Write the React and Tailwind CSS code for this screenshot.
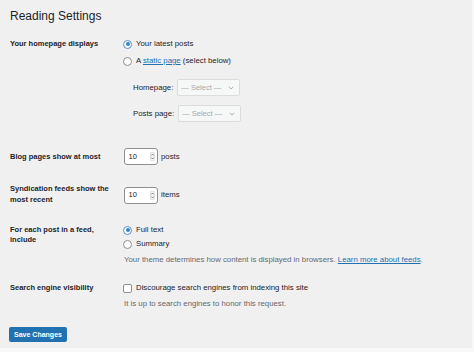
import React from "react";

function Label({ children }) {
	return (
		<div className="w-[113px] shrink-0 text-[7.5px] leading-[10px] font-bold text-[#1d2327]">
			{children}
		</div>
	);
}

function Radio({ checked }) {
	return (
		<span
			className={`flex items-center justify-center w-[9px] h-[9px] rounded-full bg-white border shrink-0 ${
				checked ? "border-[#5a8fc4]" : "border-[#8c8f94]"
			}`}>
			{checked && <span className="w-[4px] h-[4px] rounded-full bg-[#3582c4]" />}
		</span>
	);
}

function RadioRow({ checked, className = "", children }) {
	return (
		<div className={`flex items-center gap-[4px] h-[10px] ${className}`}>
			<Radio checked={checked} />
			<span className="text-[7.8px] leading-[10px] whitespace-nowrap">{children}</span>
		</div>
	);
}

function SelectBox() {
	return (
		<div className="flex items-center justify-between w-[63px] h-[17px] pl-[3px] pr-[5px] bg-[#f6f7f7] border border-[#dcdcde] rounded-[2px]">
			<span className="text-[7.5px] text-[#a7aaad]">— Select —</span>
			<svg width="6" height="4" viewBox="0 0 6 4" fill="none">
				<path d="M0.8 0.8 L3 3 L5.2 0.8" stroke="#a7aaad" strokeWidth="0.9" />
			</svg>
		</div>
	);
}

function NumberInput({ value }) {
	return (
		<div className="flex items-center justify-between w-[34px] h-[17px] pl-[3.5px] pr-[2px] bg-white border border-[#8c8f94] rounded-[3px]">
			<span className="text-[7.5px] leading-[10px]">{value}</span>
			<svg width="5" height="9" viewBox="0 0 5 9" fill="none">
				<rect x="0.3" y="0.3" width="4.4" height="8.4" rx="1.2" fill="#f4f4f4" stroke="#c3c4c7" strokeWidth="0.5" />
				<path d="M1.3 3.4 L2.5 2 L3.7 3.4" stroke="#50575e" strokeWidth="0.7" />
				<path d="M1.3 5.6 L2.5 7 L3.7 5.6" stroke="#50575e" strokeWidth="0.7" />
			</svg>
		</div>
	);
}

export default function App() {
	return (
		<div className="w-[474px] h-[352px] bg-[#f8f8f8] overflow-hidden">
			<div className="w-[472px] h-[348px] bg-[#f0f0f1] px-[10px] text-[#1d2327] font-['Liberation_Sans',Arial,sans-serif]">
				<h1 className="pt-[10px] text-[12px] leading-[12px] font-normal">Reading Settings</h1>

				{/* Homepage displays */}
				<div className="flex mt-[17px]">
					<Label>Your homepage displays</Label>
					<div>
						<RadioRow checked>Your latest posts</RadioRow>
						<RadioRow className="mt-[7px]">
							A{" "}
							<span className="text-[#2271b1] underline">static page</span>{" "}
							(select below)
						</RadioRow>
						<div className="flex items-center gap-[4px] h-[17px] mt-[13px] ml-[10px]">
							<span className="text-[7.8px]">Homepage:</span>
							<SelectBox />
						</div>
						<div className="flex items-center gap-[4px] h-[17px] mt-[9px] ml-[10px]">
							<span className="text-[7.8px]">Posts page:</span>
							<SelectBox />
						</div>
					</div>
				</div>

				{/* Blog pages */}
				<div className="flex items-center h-[17px] mt-[26px]">
					<Label>Blog pages show at most</Label>
					<div className="flex items-center gap-[3px] ml-[1px]">
						<NumberInput value="10" />
						<span className="text-[7.8px]">posts</span>
					</div>
				</div>

				{/* Syndication feeds */}
				<div className="flex mt-[19px]">
					<div className="w-[113px] shrink-0 text-[7.5px] leading-[10.5px] font-bold">
						Syndication feeds show the
						<br />
						most recent
					</div>
					<div className="flex items-center gap-[3px] ml-[1px] mt-[1px]">
						<NumberInput value="10" />
						<span className="text-[7.8px]">items</span>
					</div>
				</div>

				{/* Feed content */}
				<div className="flex mt-[20px]">
					<Label>
						For each post in a feed,
						<br />
						include
					</Label>
					<div>
						<RadioRow checked>Full text</RadioRow>
						<RadioRow className="mt-[4px]">Summary</RadioRow>
						<p className="mt-[6px] ml-[1px] text-[7.8px] leading-[10px] text-[#646970] whitespace-nowrap">
							Your theme determines how content is displayed in browsers.{" "}
							<span className="text-[#2271b1] underline">Learn more about feeds</span>.
						</p>
					</div>
				</div>

				{/* Search engine visibility */}
				<div className="flex mt-[18px]">
					<Label>Search engine visibility</Label>
					<div>
						<div className="flex items-center gap-[4px] h-[10px]">
							<span className="w-[9px] h-[9px] bg-white border border-[#8c8f94] rounded-[2px] shrink-0" />
							<span className="text-[7.8px] leading-[10px] whitespace-nowrap">
								Discourage search engines from indexing this site
							</span>
						</div>
						<p className="mt-[6px] ml-[1px] text-[7.8px] leading-[10px] text-[#646970]">
							It is up to search engines to honor this request.
						</p>
					</div>
				</div>

				<button className="mt-[18px] ml-[-1px] w-[58px] h-[15px] bg-[#2271b1] rounded-[2px] text-white text-[7px] font-bold leading-[15px]">
					Save Changes
				</button>
			</div>
		</div>
	);
}
